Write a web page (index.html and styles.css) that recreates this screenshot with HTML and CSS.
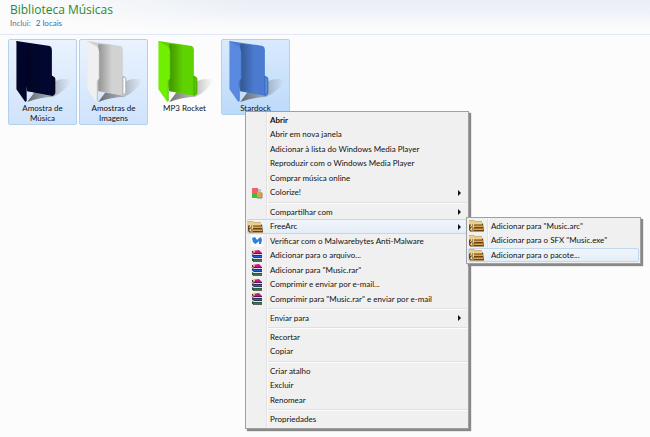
FILE: index.html
```html
<!DOCTYPE html>
<html lang="pt">
<head>
<meta charset="utf-8">
<title>Biblioteca Músicas</title>
<link rel="stylesheet" href="styles.css">
</head>
<body>
<svg class="defs" aria-hidden="true">
  <defs>
    <linearGradient id="shadow" x1="0" x2="1" y1="0" y2="0"><stop offset="0" stop-color="#333" stop-opacity=".7"/><stop offset=".6" stop-color="#555" stop-opacity=".35"/><stop offset="1" stop-color="#777" stop-opacity="0"/></linearGradient>
    <linearGradient id="fold" x1="0" x2="1" y1="0" y2="0"><stop offset="0" stop-color="#000" stop-opacity=".3"/><stop offset="1" stop-color="#000" stop-opacity="0"/></linearGradient>
    <symbol id="folder" viewBox="0 0 58 64">
      <path d="M20 52L40 42Q48 38 57 41Q50 53 38 58Q26 58 12 63Z" fill="url(#shadow)"/>
      <path d="M1 1L35 6Q37 7 37 10V36L40 38V55L38 57L12 52Z" fill="currentColor"/>
      <path d="M12 4L26 5V54L12 52Z" fill="url(#fold)"/>
      <path d="M37 37L40 39V54L37 56Z" fill="var(--tab)" stroke="var(--edge)" stroke-width="1"/>
      <path d="M1 1L11 7Q13 9 13 13V39L11 42V62L10 63L1 50Z" fill="var(--front)"/>
      <path d="M13 13V39L11 42V62" fill="none" stroke="var(--edge)" stroke-width=".7"/>
    </symbol>
    <symbol id="arc" viewBox="0 0 15 11">
      <path d="M0 0H5L6 1H13V3H14L15 11H1L0 9Z" fill="#6b3f10"/>
      <path d="M0 0H5L6 1H13V4H0Z" fill="#ecd089"/>
      <path d="M1 5H14V6.5H1ZM1 8H14V9.5H1Z" fill="#d6a850"/>
      <path d="M2 3H5V10H2Z" fill="#e6d5a0"/><path d="M3 4H4V5H3ZM2 6H4V7H2ZM3 8H5V9H3Z" fill="#554525"/>
    </symbol>
    <symbol id="rar" viewBox="0 0 12 12">
      <path d="M1 1L8 0L11 3V4H3L1 3Z" fill="#c4187e"/>
      <path d="M1 4.5L3 5H11V8H3L1 6.5Z" fill="#2a5fd0"/>
      <path d="M1 8L3 9H11V12H3L1 10.5Z" fill="#1f8a4a"/>
      <path d="M3 4.5H11M3 8.2H11M3 11.2H11" stroke="#cfd6d4" stroke-width=".8"/>
      <path d="M1 1L3 3.5H11M1 3.5L3 5.5H11M1 5L3 7.5H11M1 9L3 10H11M1 10L3 11.8H11" fill="none" stroke="#2b1c2c" stroke-width=".7"/>
      <path d="M2 1H4V2.5H2Z" fill="#ecc24e"/>
    </symbol>
  </defs>
</svg>
<header class="library">
  <h1>Biblioteca Músicas</h1>
  <p>Inclui: <a href="#locais">2 locais</a></p>
</header>
<main class="files" id="locais">
  <button class="file selected navy"><svg><use href="#folder"/></svg><span>Amostra de Música</span></button>
  <button class="file selected silver"><svg><use href="#folder"/></svg><span>Amostras de Imagens</span></button>
  <button class="file green"><svg><use href="#folder"/></svg><span>MP3 Rocket</span></button>
  <button class="file selected active blue"><svg><use href="#folder"/></svg><span>Stardock</span></button>
</main>
<nav class="menu context" aria-label="Menu de contexto">
  <ul>
    <li><button class="default">Abrir</button></li>
    <li><button>Abrir em nova janela</button></li>
    <li><button>Adicionar à lista do Windows Media Player</button></li>
    <li><button>Reproduzir com o Windows Media Player</button></li>
    <li><button>Comprar música online</button></li>
    <li><button class="more"><svg class="icon" viewBox="0 0 12 12"><path d="M1 1H7V6H1Z" fill="#f0606a"/><path d="M1 6H6V11H1Z" fill="#42bd34"/><path d="M7 2H10V5H7Z" fill="#b9c4dc"/><path d="M6 5H11V11H6Z" fill="#d9a44e"/><path d="M11 6V11H6" fill="none" stroke="#7b83a4"/></svg>Colorize!</button></li>
  </ul>
  <ul>
    <li><button class="more">Compartilhar com</button></li>
    <li class="parent"><button class="more hot"><svg class="icon wide"><use href="#arc"/></svg>FreeArc</button>
      <div class="menu submenu">
        <ul>
          <li><button><svg class="icon wide"><use href="#arc"/></svg>Adicionar para "Music.arc"</button></li>
          <li><button><svg class="icon wide"><use href="#arc"/></svg>Adicionar para o SFX "Music.exe"</button></li>
          <li><button class="hot"><svg class="icon wide"><use href="#arc"/></svg>Adicionar para o pacote...</button></li>
        </ul>
      </div>
    </li>
    <li><button><svg class="icon" viewBox="0 0 12 12"><path d="M0 0H12V12H0Z" fill="#fafcff"/><path d="M1 3L4 2L6 5L8 3L10 2L11 5L10 9H8V6L6 8L4 9L2 7Z" fill="#2f7fdc"/></svg>Verificar com o Malwarebytes Anti-Malware</button></li>
    <li><button><svg class="icon"><use href="#rar"/></svg>Adicionar para o arquivo...</button></li>
    <li><button><svg class="icon"><use href="#rar"/></svg>Adicionar para "Music.rar"</button></li>
    <li><button><svg class="icon"><use href="#rar"/></svg>Comprimir e enviar por e-mail...</button></li>
    <li><button><svg class="icon"><use href="#rar"/></svg>Comprimir para "Music.rar" e enviar por e-mail</button></li>
  </ul>
  <ul><li><button class="more">Enviar para</button></li></ul>
  <ul><li><button>Recortar</button></li><li><button>Copiar</button></li></ul>
  <ul><li><button>Criar atalho</button></li><li><button>Excluir</button></li><li><button>Renomear</button></li></ul>
  <ul><li><button>Propriedades</button></li></ul>
</nav>
</body>
</html>
```
FILE: styles.css
```css
* { box-sizing: border-box; }
body { margin: 0; min-height: 100vh; background: #fcfcfc; color: #111; font: 8px/11px Lato, "Open Sans", sans-serif; }
h1, p, ul { margin: 0; padding: 0; font-weight: 400; }
ul { list-style: none; }
button { font: inherit; color: inherit; background: none; border: 1px solid transparent; margin: 0; padding: 0; }
.defs { position: absolute; width: 0; height: 0; }
.library { padding: 2px 10px 5px; border-bottom: 1px solid #dfe8f8; background: linear-gradient(90deg, #fcfcfc, transparent 40%), linear-gradient(#e9eff5, #edf1f8 30%, #fcfcfc 85%); }
.library h1 { color: #2a8a2f; font: 12px/16px "Open Sans", sans-serif; }
.library p { color: #6b7480; }
.library a { color: #1c70c8; text-decoration: none; margin-left: 3px; }
.files { display: flex; align-items: flex-start; gap: 2px; padding: 4px 8px; }
.file { display: flex; flex-direction: column; align-items: center; width: 69px; padding: 0 4px 1px; border-radius: 2px; line-height: 10px; }
.file svg { width: 58px; height: 63px; margin-left: 2px; }
.file span { color: #111; }
.selected { border-color: #b3d0ec; background: linear-gradient(#eaf3fe, #cfe3fb); }
.active { background: linear-gradient(#d9eafd, #bddafa); }
.navy { color: #020730; --front: #01052a; --tab: #020630; --edge: #00001a; }
.silver { color: #d2d2d2; --front: #f0f0f0; --tab: #fff; --edge: #aaa; }
.green { color: #5fd300; --front: #70ef00; --tab: #58cb00; --edge: #48a800; }
.blue { color: #4a7bd0; --front: #5a8ae0; --tab: #5b8de0; --edge: #3969bb; }
.menu { position: absolute; border: 1px solid #a0a0a0; padding: 1px; background: linear-gradient(90deg, transparent 20px, #e2e2e2 20px, #e2e2e2 21px, #fafafa 21px, #fafafa 22px, transparent 22px) #f0f0f0; box-shadow: 2px 2px 1px #888; }
.context { left: 245px; top: 111px; width: 224px; padding-bottom: 2px; }
.menu ul { display: grid; grid-auto-rows: 14px 15px; }
.menu ul + ul { margin-top: 5px; position: relative; }
.menu ul + ul::before { content: ""; position: absolute; top: -3px; left: 21px; right: 0; border-top: 1px solid #e0e0e0; border-bottom: 1px solid #fcfcfc; }
.menu li { display: grid; }
.menu button { display: flex; align-items: center; position: relative; padding-left: 22px; text-align: left; white-space: nowrap; border-radius: 2px; }
.menu .default { font-weight: 700; }
.menu .hot { border-color: #bdd8f0; background: linear-gradient(#f0f5fa, #e4edf7); }
.icon { position: absolute; left: 3px; width: 12px; height: 12px; }
.icon.wide { left: 0; width: 15px; }
.more::after { content: ""; margin-left: auto; margin-right: 5px; border-left: 3px solid #111; border-top: 3px solid transparent; border-bottom: 3px solid transparent; }
.parent { position: relative; }
.menu.submenu { left: calc(100% - 1px); top: -2px; width: 175px; z-index: 1; }
```
